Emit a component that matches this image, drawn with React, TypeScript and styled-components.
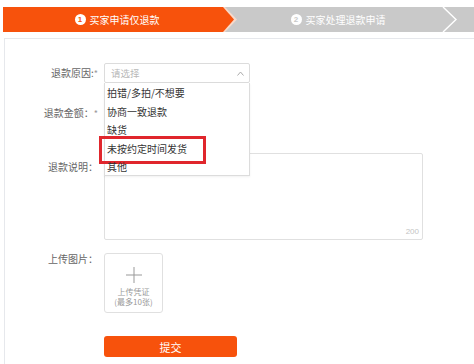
import React from "react";
import styled, { createGlobalStyle } from "styled-components";

const GlobalStyle = createGlobalStyle`
  html, body { margin: 0; padding: 0; background: #fff; }
  body {
    font-family: "Noto Sans CJK SC", "Noto Sans", "Liberation Sans", sans-serif;
    -webkit-font-smoothing: antialiased;
  }
  * { box-sizing: border-box; }
`;

const Page = styled.div`
  width: 474px;
  height: 364px;
  overflow: hidden;
  padding: 7px 0 0 3px;
`;

const Steps = styled.div`
  display: flex;
  align-items: stretch;
  height: 25px;
  background: #c9c9c9;
`;

const StepActiveOutline = styled.div`
  position: relative;
  width: 234px;
  margin-right: -3px;
  background: #f7d9ca;
  clip-path: polygon(0 0, 222px 0, 234px 50%, 222px 100%, 0 100%);
  display: flex;
`;

const StepActive = styled.div`
  width: 232px;
  background: #f7520c;
  clip-path: polygon(0 0, 220px 0, 231px 50%, 220px 100%, 0 100%);
  display: flex;
  align-items: center;
  justify-content: center;
  gap: 4px;
  color: #fff;
  font-size: 10px;
  padding-right: 4px;
`;

const Step = styled.div`
  width: 208px;
  display: flex;
  align-items: center;
  justify-content: center;
  gap: 4px;
  color: #fff;
  font-size: 10px;
`;

const Num = styled.span<{ $color: string }>`
  width: 11px;
  height: 11px;
  border-radius: 50%;
  background: #fff;
  color: ${(p) => p.$color};
  font-size: 8px;
  font-weight: bold;
  display: inline-flex;
  align-items: center;
  justify-content: center;
  font-family: "Liberation Sans", sans-serif;
`;

const Chevron = styled.svg`
  width: 16px;
  height: 25px;
  flex: none;
`;

const Panel = styled.div`
  margin-top: 6px;
  margin-left: 1px;
  border-top: 1px solid #e6e8ec;
  border-left: 1px solid #e6e8ec;
  height: 330px;
  padding-top: 24px;
`;

const Row = styled.div<{ $mt?: number }>`
  display: grid;
  grid-template-columns: 93px 1fr;
  column-gap: 6px;
  margin-top: ${(p) => p.$mt ?? 0}px;
  align-items: start;
`;

const Label = styled.div<{ $pt?: number; $lh?: number }>`
  text-align: right;
  font-size: 10px;
  line-height: ${(p) => p.$lh ?? 20}px;
  color: #666;
  padding-top: ${(p) => p.$pt ?? 0}px;
  white-space: nowrap;
`;

const Star = styled.span`
  color: #999;
  font-size: 9px;
`;

const SelectWrap = styled.div`
  position: relative;
  width: 146px;
  z-index: 2;
`;

const Select = styled.div`
  height: 20px;
  border: 1px solid #dcdcdc;
  border-radius: 2px;
  display: flex;
  align-items: center;
  justify-content: space-between;
  padding: 0 5px 0 6px;
  font-size: 9.5px;
  color: #b8b8b8;
  background: #fff;
`;

const Caret = styled.svg`
  width: 7px;
  height: 5px;
`;

const Dropdown = styled.ul`
  position: absolute;
  top: 100%;
  left: 0;
  width: 146px;
  height: 93px;
  margin: 0;
  padding: 1px 0 0;
  list-style: none;
  background: #fff;
  border: 1px solid #dcdcdc;
  border-top: none;
  box-shadow: 0 1px 2px rgba(0, 0, 0, 0.06);
`;

const Item = styled.li<{ $marked?: boolean }>`
  position: relative;
  height: 18.5px;
  line-height: 18.5px;
  padding-left: 2px;
  font-size: 10px;
  color: #333;
  white-space: nowrap;
  ${(p) =>
    p.$marked &&
    `
    &::after {
      content: "";
      position: absolute;
      left: -6px;
      top: -4px;
      width: 101px;
      height: 22px;
      border: 3px solid #e0262c;
    }
  `}
`;

const AmountInput = styled.div`
  width: 120px;
  height: 20px;
  border: 1px solid #dcdcdc;
  border-radius: 2px;
`;

const TextArea = styled.div`
  position: relative;
  width: 319px;
  height: 87px;
  border: 1px solid #e0e0e0;
  border-radius: 2px;
  background: #fff;
`;

const Counter = styled.span`
  position: absolute;
  right: 3px;
  bottom: 3px;
  font-size: 8px;
  color: #c4c4c4;
  font-family: "Liberation Sans", sans-serif;
`;

const Upload = styled.div`
  width: 59px;
  height: 60px;
  border: 1px solid #e0e0e0;
  border-radius: 3px;
  display: flex;
  flex-direction: column;
  align-items: center;
  padding-top: 13px;
  color: #999;
  font-size: 8px;
  line-height: 10px;
`;

const Plus = styled.svg`
  width: 16px;
  height: 16px;
  margin-bottom: 4px;
`;

const Submit = styled.button`
  width: 133px;
  height: 21px;
  border: none;
  border-radius: 3px;
  background: #f7520c;
  color: #fff;
  font-family: inherit;
  font-size: 11px;
  padding: 0;
`;

const reasons = ["拍错/多拍/不想要", "协商一致退款", "缺货", "未按约定时间发货", "其他"];

export default function App() {
  return (
    <>
      <GlobalStyle />
      <Page>
        <Steps>
          <StepActiveOutline>
            <StepActive>
              <Num $color="#f7520c">1</Num>
              买家申请仅退款
            </StepActive>
          </StepActiveOutline>
          <Step>
            <Num $color="#c9c9c9">2</Num>
            买家处理退款申请
          </Step>
          <Chevron viewBox="0 0 16 25">
            <polyline points="1,0 14,12.5 1,25" fill="none" stroke="#fff" strokeWidth="1.4" />
          </Chevron>
        </Steps>
        <Panel>
          <Row>
            <Label>
              退款原因:<Star>*</Star>
            </Label>
            <SelectWrap>
              <Select>
                请选择
                <Caret viewBox="0 0 7 5">
                  <polyline points="0.5,4.5 3.5,1 6.5,4.5" fill="none" stroke="#aaa" strokeWidth="1" />
                </Caret>
              </Select>
              <Dropdown>
                {reasons.map((r) => (
                  <Item key={r} $marked={r === "未按约定时间发货"}>
                    {r}
                  </Item>
                ))}
              </Dropdown>
            </SelectWrap>
          </Row>
          <Row $mt={19}>
            <Label>
              退款金额：<Star>*</Star>
            </Label>
            <AmountInput />
          </Row>
          <Row $mt={29}>
            <Label $pt={4}>退款说明：</Label>
            <TextArea>
              <Counter>200</Counter>
            </TextArea>
          </Row>
          <Row $mt={13}>
            <Label $lh={12}>上传图片：</Label>
            <Upload>
              <Plus viewBox="0 0 16 16">
                <path d="M8 0V16M0 8H16" stroke="#999" strokeWidth="1" />
              </Plus>
              <span>上传凭证</span>
              <span>(最多10张)</span>
            </Upload>
          </Row>
          <Row $mt={23}>
            <span />
            <Submit>提交</Submit>
          </Row>
        </Panel>
      </Page>
    </>
  );
}
